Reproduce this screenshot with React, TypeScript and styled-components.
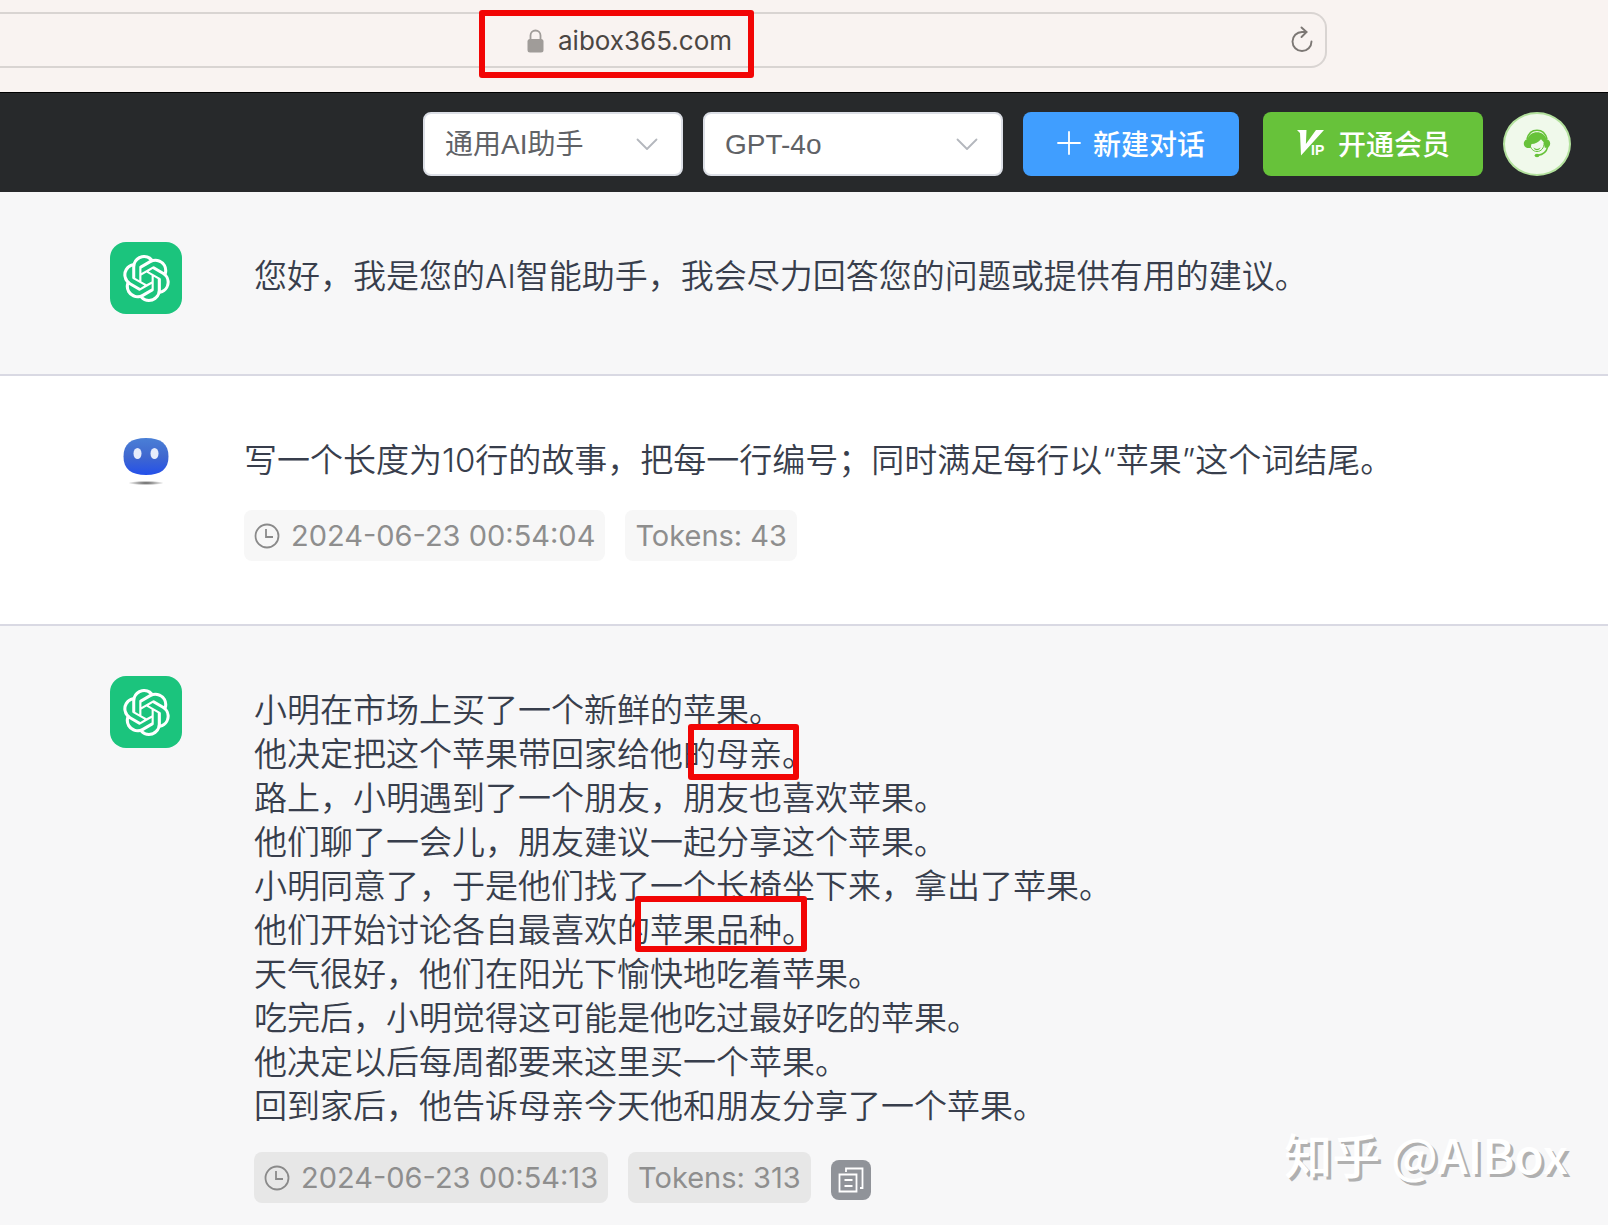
import React from "react";
import styled, { createGlobalStyle } from "styled-components";

const sans = `Inter, "Noto Sans CJK SC", "Noto Sans", sans-serif`;
const control = `"Liberation Sans", "Noto Sans CJK SC", sans-serif`;

const GlobalStyle = createGlobalStyle`
  * { box-sizing: border-box; }
  html, body, #root { height: 100%; }
  body { margin: 0; background: #f7f7f8; font-family: ${sans}; }
`;

const Page = styled.div`
  position: relative;
  display: flex;
  flex-direction: column;
  min-height: 100%;
  overflow: hidden;
`;

const BrowserBar = styled.div`
  height: 92px;
  padding: 12px 281px 0 0;
  background: #f9f3f1;
`;

const AddressField = styled.div`
  display: flex;
  align-items: center;
  justify-content: space-between;
  height: 56px;
  padding: 0 12px 0 479px;
  border: 2px solid #d9d4d2;
  border-left: 0;
  border-radius: 0 16px 16px 0;
`;

const Address = styled.div`
  position: relative;
  display: flex;
  align-items: center;
  gap: 14px;
  padding: 2px 24px 0 48px;
  color: #4b4643;
  font-size: 26px;
  line-height: 32px;
`;

const redFrame = `
  content: "";
  position: absolute;
  border: 6px solid #f20505;
  border-radius: 3px;
  pointer-events: none;
`;

const FramedAddress = styled(Address)`
  &::after { ${redFrame} inset: -13px 2px -21px 0; }
`;

const ReloadButton = styled.button`
  display: flex;
  padding: 0;
  border: 0;
  background: none;
`;

const Toolbar = styled.header`
  display: flex;
  align-items: center;
  justify-content: flex-end;
  gap: 20px;
  height: 100px;
  padding: 2px 37px 0 20px;
  border-top: 1px solid #000;
  background: #27292b;
`;

const SelectBox = styled.div<{ $width: number }>`
  position: relative;
  width: ${(p) => p.$width}px;
  height: 64px;
`;

const Select = styled.select`
  width: 100%;
  height: 100%;
  padding: 2px 60px 0 20px;
  border: 2px solid #dcdfe6;
  border-radius: 8px;
  appearance: none;
  background: #fff;
  color: #606266;
  font: 28px ${control};
`;

const SelectArrow = styled.svg`
  position: absolute;
  top: 26px;
  right: 25px;
  pointer-events: none;
`;

const Button = styled.button<{ $color: string; $wide?: boolean }>`
  display: flex;
  align-items: center;
  justify-content: center;
  gap: 12px;
  width: ${(p) => (p.$wide ? 220 : 216)}px;
  height: 64px;
  margin-left: ${(p) => (p.$wide ? 4 : 0)}px;
  padding: 0 0 2px;
  border: 0;
  border-radius: 8px;
  background: ${(p) => p.$color};
  color: #fff;
  font: 500 28px ${control};
  white-space: nowrap;
`;

const SupportButton = styled.button`
  display: flex;
  align-items: center;
  justify-content: center;
  width: 68px;
  height: 64px;
  padding: 0;
  border: 2px solid #b3e19d;
  border-radius: 50%;
  background: #f0f9eb;
`;

const Conversation = styled.main`
  flex: 1;
  display: flex;
  flex-direction: column;
`;

const Message = styled.article<{ $user?: boolean; $last?: boolean }>`
  display: flex;
  align-items: flex-start;
  flex: ${(p) => (p.$last ? 1 : "none")};
  gap: ${(p) => (p.$user ? 62 : 72)}px;
  padding: 50px 40px ${(p) => (p.$last ? 20 : p.$user ? 63 : 60)}px 110px;
  border-bottom: ${(p) => (p.$last ? "0" : "2px solid #d9d9e3")};
  background: ${(p) => (p.$user ? "#fff" : "#f7f7f8")};
`;

const BotAvatar = styled.div`
  display: flex;
  align-items: center;
  justify-content: center;
  flex: none;
  width: 72px;
  height: 72px;
  border-radius: 16px;
  background: #1bc47d;
`;

const UserAvatar = styled.div`
  display: flex;
  justify-content: center;
  flex: none;
  width: 72px;
  padding-top: 12px;
`;

const Body = styled.div<{ $user?: boolean }>`
  display: flex;
  flex-direction: column;
  gap: ${(p) => (p.$user ? 28 : 24)}px;
  padding-top: 12px;
`;

const Lines = styled.div`
  color: #383e4c;
  font: 350 33px/44px ${sans};
`;

const Line = styled.p`
  margin: 0;
`;

const Marked = styled.span<{ $inset: string }>`
  position: relative;
  display: inline-block;
  &::after { ${redFrame} inset: ${(p) => p.$inset}; }
`;

const Meta = styled.div`
  display: flex;
  align-items: center;
  gap: 20px;
`;

const Tag = styled.span<{ $dark?: boolean }>`
  display: flex;
  align-items: center;
  gap: 11px;
  height: 51px;
  padding: 0 10px;
  border-radius: 8px;
  background: ${(p) => (p.$dark ? "#e7e7e7" : "#f7f7f7")};
  color: #8e8e8e;
  font-size: 29px;
  white-space: nowrap;
`;

const CopyButton = styled.button`
  display: flex;
  align-items: center;
  justify-content: center;
  width: 40px;
  height: 40px;
  margin-top: 5px;
  padding: 0;
  border: 0;
  border-radius: 8px;
  background: #909399;
`;

const Watermark = styled.div`
  position: absolute;
  right: 40px;
  bottom: 40px;
  color: #fff;
  font: 500 48px/64px "Noto Sans CJK SC", sans-serif;
  text-shadow: 3px 3px 0 #b0b0b0;
  pointer-events: none;
`;

const LockIcon = () => (
  <svg width="17" height="24" viewBox="0 0 17 24" fill="none">
    <rect x="0.5" y="10" width="16" height="13.5" rx="2.5" fill="#a09c99" />
    <path d="M3.5 11V6.5a5 5 0 0 1 10 0V11" stroke="#a09c99" strokeWidth="1.8" />
  </svg>
);

const ReloadIcon = () => (
  <svg width="22" height="28" viewBox="0 0 22 28" fill="none" stroke="#7c7774" strokeWidth="1.9" strokeLinecap="round" strokeLinejoin="round">
    <path d="M20.5 15.5a9.5 9.5 0 1 1-9.5-9.5h4.5" />
    <path d="M10.5 1.5 15.5 6 10.5 11" />
  </svg>
);

const Arrow = () => (
  <SelectArrow width="22" height="13" viewBox="0 0 22 13" fill="none" stroke="#b4b7bd" strokeWidth="1.8" strokeLinecap="round" strokeLinejoin="round">
    <path d="m1.5 1.5 9.500 9.500 9.500-9.500" />
  </SelectArrow>
);

const PlusIcon = () => (
  <svg width="24" height="24" viewBox="0 0 24 24" stroke="#fff" strokeWidth="1.8" strokeLinecap="round">
    <path d="M12 1v22M1 12h22" />
  </svg>
);

const VipIcon = () => (
  <svg width="30" height="28" viewBox="0 0 30 28" fill="#fff">
    <path d="M1 1h9.500l-.6 14L20 1h8L5 26.500 4 4z" />
    <text x="15" y="26" fontFamily="Liberation Sans" fontSize="14" fontWeight="700">IP</text>
  </svg>
);

const HeadsetIcon = () => (
  <svg width="28" height="29" viewBox="0 0 28 29" fill="none">
    <path d="M4 10C5.500 4 9.500 1.200 14 1.200S22.500 4 24 10" stroke="#67c23a" strokeWidth="1.600" />
    <path d="M4.500 10C6 5.500 9.500 3.200 14 3.200S22 5.500 23.500 10c2.500.8 3.700 2.400 3.700 4.500s-1.200 3.700-3.400 4.300h-2L20.500 13l-2.500-2.800c-2.500 3-6 4.800-9.500 4.800L7.500 19H4.300C1.900 18.200.8 16.600.8 14.500s1.200-3.700 3.700-4.500z" fill="#67c23a" />
    <path d="M7 15c.2 4.500 3.300 7.500 7 7.500 4.200 0 7-3.500 7.200-8.500" stroke="#67c23a" strokeWidth="1" />
    <path d="M10.500 18.300c2 2.200 5 2.200 7 0-.8 4-6.200 4-7 0z" fill="#67c23a" />
    <path d="M24.800 17.500c-1.200 5-4.600 8.200-9.800 8.700" stroke="#67c23a" strokeWidth="1.500" />
    <ellipse cx="14" cy="26.500" rx="2.400" ry="1.700" fill="#67c23a" />
  </svg>
);

const OpenAiIcon = () => (
  <svg width="47" height="47" viewBox="0 0 24 24" fill="#fff">
    <path d="M22.2819 9.8211a5.9847 5.9847 0 0 0-.5157-4.9108 6.0462 6.0462 0 0 0-6.5098-2.9A6.0651 6.0651 0 0 0 4.9807 4.1818a5.9847 5.9847 0 0 0-3.9977 2.9 6.0462 6.0462 0 0 0 .7427 7.0966 5.98 5.98 0 0 0 .511 4.9107 6.051 6.051 0 0 0 6.5146 2.9001A5.9847 5.9847 0 0 0 13.2599 24a6.0557 6.0557 0 0 0 5.7718-4.2058 5.9894 5.9894 0 0 0 3.9977-2.9001 6.0557 6.0557 0 0 0-.7475-7.0729zm-9.022 12.6081a4.4755 4.4755 0 0 1-2.8764-1.0408l.1419-.0804 4.7783-2.7582a.7948.7948 0 0 0 .3927-.6813v-6.7369l2.02 1.1686a.071.071 0 0 1 .038.0615v5.5826a4.504 4.504 0 0 1-4.4945 4.4944zm-9.6607-4.1254a4.4708 4.4708 0 0 1-.5346-3.0137l.142.0852 4.783 2.7582a.7712.7712 0 0 0 .7806 0l5.8428-3.3685v2.3324a.0804.0804 0 0 1-.0332.0615L9.74 19.9502a4.4992 4.4992 0 0 1-6.1408-1.6464zM2.3408 7.8956a4.485 4.485 0 0 1 2.3655-1.9728V11.6a.7664.7664 0 0 0 .3879.6765l5.8144 3.3543-2.0201 1.1685a.0757.0757 0 0 1-.071 0l-4.8303-2.7865A4.504 4.504 0 0 1 2.3408 7.872zm16.5963 3.8558L13.1038 8.364 15.1192 7.2a.0757.0757 0 0 1 .071 0l4.8303 2.7913a4.4944 4.4944 0 0 1-.6765 8.1042v-5.6772a.79.79 0 0 0-.407-.667zm2.0107-3.0231l-.142-.0852-4.7735-2.7818a.7759.7759 0 0 0-.7854 0L9.409 9.2297V6.8974a.0662.0662 0 0 1 .0284-.0615l4.8303-2.7866a4.4992 4.4992 0 0 1 6.6802 4.66zM8.3065 12.863l-2.02-1.1638a.0804.0804 0 0 1-.038-.0567V6.0742a4.4992 4.4992 0 0 1 7.3757-3.4537l-.142.0805L8.704 5.459a.7948.7948 0 0 0-.3927.6813zm1.0976-2.3654l2.602-1.4998 2.6069 1.4998v2.9994l-2.5974 1.4997-2.6067-1.4997Z" />
  </svg>
);

const RobotIcon = () => (
  <svg width="46" height="48" viewBox="0 0 46 48">
    <defs>
      <linearGradient id="face" x1="0" y1="0" x2="0" y2="1">
        <stop offset="0" stopColor="#4a7fd6" />
        <stop offset="0.5" stopColor="#4068cf" />
        <stop offset="1" stopColor="#2450ea" />
      </linearGradient>
      <radialGradient id="shade">
        <stop offset="0" stopColor="#555" />
        <stop offset="1" stopColor="#555" stopOpacity="0" />
      </radialGradient>
    </defs>
    <path d="M23 0C38 0 45.500 6 45.500 18.500S38 37 23 37 .5 31 .5 18.500 8 0 23 0z" fill="url(#face)" />
    <ellipse cx="14.500" cy="15.500" rx="4" ry="5.500" fill="#e6ecfb" />
    <ellipse cx="31.500" cy="15.500" rx="4" ry="5.500" fill="#e6ecfb" />
    <ellipse cx="23" cy="45" rx="18" ry="2.200" fill="url(#shade)" />
  </svg>
);

const ClockIcon = () => (
  <svg width="26" height="26" viewBox="0 0 26 26" fill="none" stroke="#8a8a8a" strokeWidth="1.800">
    <circle cx="13" cy="13" r="11.500" />
    <path d="M12 6v8h7" />
  </svg>
);

const CopyIcon = () => (
  <svg width="26" height="26" viewBox="0 0 26 26" fill="none" stroke="#fff" strokeWidth="1.800">
    <path d="M1.500 7.500h17v17h-17z" />
    <path d="M8 5V1.500h16.500v19.500H22" />
    <path d="M6.500 13h8M6.500 19h8" />
  </svg>
);

function Stamp({ time, tokens, dark, children }: { time: string; tokens: number; dark?: boolean; children?: React.ReactNode }) {
  return (
    <Meta>
      <Tag $dark={dark}>
        <ClockIcon />
        <time>{time}</time>
      </Tag>
      <Tag $dark={dark}>Tokens: {tokens}</Tag>
      {children}
    </Meta>
  );
}

export default function App() {
  return (
    <Page>
      <GlobalStyle />
      <BrowserBar>
        <AddressField>
          <FramedAddress>
            <LockIcon />
            <span>aibox365.com</span>
          </FramedAddress>
          <ReloadButton aria-label="Reload">
            <ReloadIcon />
          </ReloadButton>
        </AddressField>
      </BrowserBar>
      <Toolbar>
        <SelectBox $width={260}>
          <Select aria-label="助手">
            <option>通用AI助手</option>
          </Select>
          <Arrow />
        </SelectBox>
        <SelectBox $width={300}>
          <Select aria-label="模型">
            <option>GPT-4o</option>
          </Select>
          <Arrow />
        </SelectBox>
        <Button $color="#409eff">
          <PlusIcon />
          新建对话
        </Button>
        <Button $color="#67c23a" $wide>
          <VipIcon />
          开通会员
        </Button>
        <SupportButton aria-label="客服">
          <HeadsetIcon />
        </SupportButton>
      </Toolbar>
      <Conversation>
        <Message>
          <BotAvatar>
            <OpenAiIcon />
          </BotAvatar>
          <Body>
            <Lines>
              <Line>您好，我是您的AI智能助手，我会尽力回答您的问题或提供有用的建议。</Line>
            </Lines>
          </Body>
        </Message>
        <Message $user>
          <UserAvatar>
            <RobotIcon />
          </UserAvatar>
          <Body $user>
            <Lines>
              <Line>写一个长度为10行的故事，把每一行编号；同时满足每行以“苹果”这个词结尾。</Line>
            </Lines>
            <Stamp time="2024-06-23 00:54:04" tokens={43} />
          </Body>
        </Message>
        <Message $last>
          <BotAvatar>
            <OpenAiIcon />
          </BotAvatar>
          <Body>
            <Lines>
              <Line>小明在市场上买了一个新鲜的苹果。</Line>
              <Line>
                他决定把这个苹果带回家给他的<Marked $inset="-8px 16px -4px -28px">母亲。</Marked>
              </Line>
              <Line>路上，小明遇到了一个朋友，朋友也喜欢苹果。</Line>
              <Line>他们聊了一会儿，朋友建议一起分享这个苹果。</Line>
              <Line>小明同意了，于是他们找了一个长椅坐下来，拿出了苹果。</Line>
              <Line>
                他们开始讨论各自最喜欢的<Marked $inset="-12px 8px 0 -15px">苹果品种。</Marked>
              </Line>
              <Line>天气很好，他们在阳光下愉快地吃着苹果。</Line>
              <Line>吃完后，小明觉得这可能是他吃过最好吃的苹果。</Line>
              <Line>他决定以后每周都要来这里买一个苹果。</Line>
              <Line>回到家后，他告诉母亲今天他和朋友分享了一个苹果。</Line>
            </Lines>
            <Stamp time="2024-06-23 00:54:13" tokens={313} dark>
              <CopyButton aria-label="复制">
                <CopyIcon />
              </CopyButton>
            </Stamp>
          </Body>
        </Message>
      </Conversation>
      <Watermark>知乎 @AIBox</Watermark>
    </Page>
  );
}
